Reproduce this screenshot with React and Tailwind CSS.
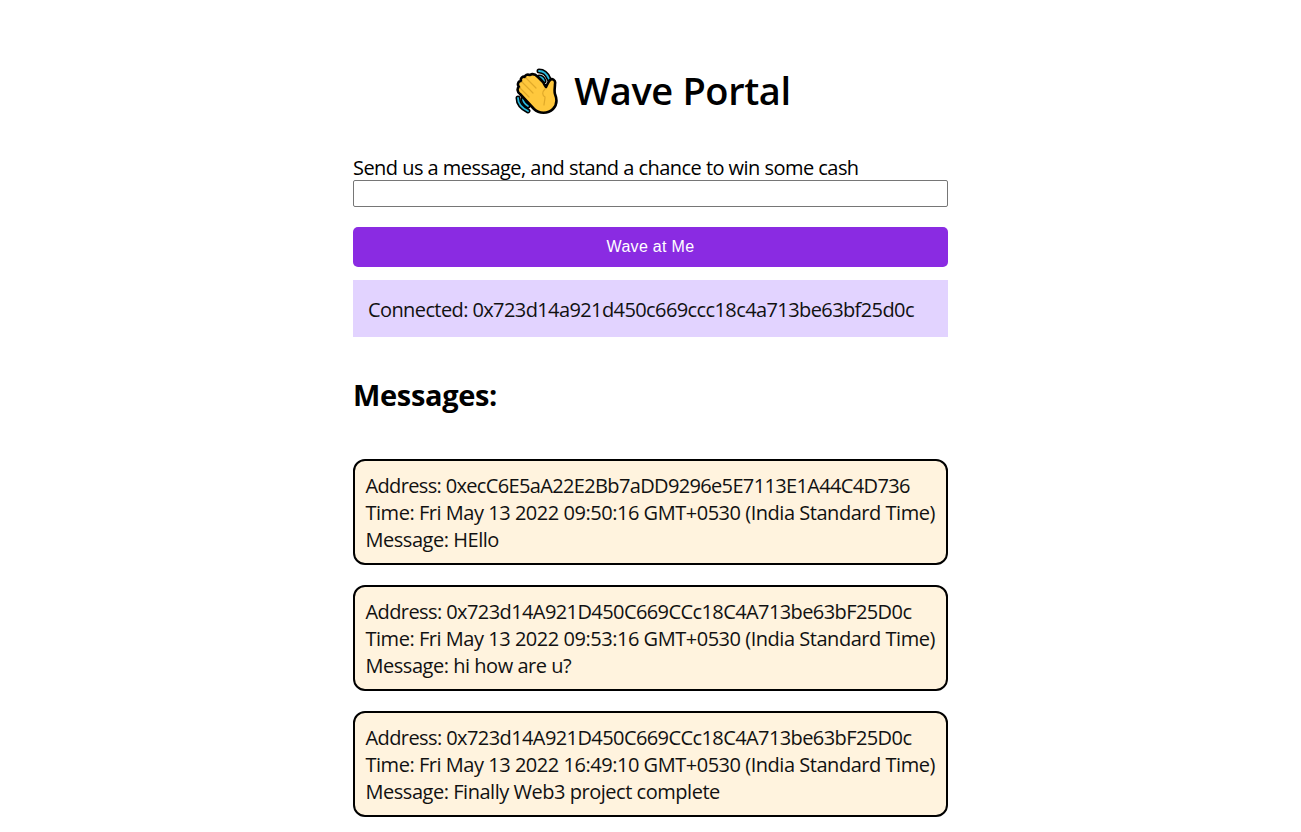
const FONT = "font-['Open_Sans','Noto_Sans',sans-serif]";

function Wave() {
  return (
    <svg width="46" height="48" viewBox="0 0 46 48" className="shrink-0 mt-[1px]">
      <g fill="none" stroke="#000" strokeWidth="5" strokeLinecap="round">
        <path d="M25 4c4 0 8 3 10 8" />
        <path d="M25 10c2 0 4 1 5 4" />
        <path d="M4 31c0 5 4 10 10 13" />
        <path d="M9 32c0 3 2 5 5 7" />
      </g>
      <g fill="none" stroke="#2bb8dc" strokeWidth="1.800" strokeLinecap="round">
        <path d="M25 4c4 0 8 3 10 8" />
        <path d="M25 10c2 0 4 1 5 4" />
        <path d="M4 31c0 5 4 10 10 13" />
        <path d="M9 32c0 3 2 5 5 7" />
      </g>
      <path
        d="M16 8C19 6 22 8 24 10L29 15C30 17 31 19 32 20C33 18 34 15 36 13C38 11 42 13 41 17C41 21 40 24 41 27C43 32 43 38 39 42C34 47 25 47 20 42L6 27C3 25 3 21 5 20C3 18 4 14 7 14C6 11 9 9 11 10C11 8 13 7 16 8Z"
        fill="#ffc83d"
        stroke="#000"
        strokeWidth="2.600"
        strokeLinejoin="round"
      />
      <g fill="none" stroke="#e0a92a" strokeWidth="1.200" strokeLinecap="round">
        <path d="M12 11L22 21" />
        <path d="M8 15L19 26" />
        <path d="M6 21L15 30" />
        <path d="M31 22C28 25 28 28 31 30C31 33 30 36 30 38" />
      </g>
    </svg>
  );
}

function Card({ address, time, message, addressTracking }) {
  return (
    <div className="border-2 border-black rounded-xl bg-[#fff3de] px-[10.5px] py-[11px] text-[20px] leading-[27px] tracking-[-0.47px] text-[#111] whitespace-nowrap h-[106px]">
      <div className={addressTracking}>Address: {address}</div>
      <div>Time: {time}</div>
      <div>Message: {message}</div>
    </div>
  );
}

export default function App() {
  return (
    <div className={`${FONT} bg-white text-black min-h-[832px] flex justify-center`}>
      <div className="w-[595px] pt-[65px]">
        <div className="flex items-center justify-center gap-[14px] h-[50px] pl-[4px]">
          <Wave />
          <h1 className="text-[38px] leading-[50px] font-semibold tracking-[-0.38px]">Wave Portal</h1>
        </div>
        <div className="mt-[39px] text-[20px] leading-[27px] tracking-[-0.54px] h-[26px] whitespace-nowrap">
          Send us a message, and stand a chance to win some cash
        </div>
        <input className="block w-full h-[27px] border border-[#767676] rounded-[2px] bg-white" />
        <button className="block w-full h-[40px] mt-[20px] bg-[#8a2be2] rounded-[5px] text-white text-[16px] tracking-[0.3px] font-['Liberation_Sans',sans-serif]">
          Wave at Me
        </button>
        <div className="mt-[13px] h-[57px] bg-[#e2d3ff] px-[15px] pt-[2px] flex items-center text-[20px] tracking-[-0.6px] text-[#111] whitespace-nowrap">
          Connected: 0x723d14a921d450c669ccc18c4a713be63bf25d0c
        </div>
        <h2 className="mt-[38px] text-[29px] leading-[40px] font-bold tracking-[-0.33px]">Messages:</h2>
        <div className="mt-[44px] flex flex-col gap-[20px]">
          <Card addressTracking="tracking-[-0.65px]" address="0xecC6E5aA22E2Bb7aDD9296e5E7113E1A44C4D736" time="Fri May 13 2022 09:50:16 GMT+0530 (India Standard Time)" message="HEllo" />
          <Card addressTracking="tracking-[-0.59px]" address="0x723d14A921D450C669CCc18C4A713be63bF25D0c" time="Fri May 13 2022 09:53:16 GMT+0530 (India Standard Time)" message="hi how are u?" />
          <Card addressTracking="tracking-[-0.59px]" address="0x723d14A921D450C669CCc18C4A713be63bF25D0c" time="Fri May 13 2022 16:49:10 GMT+0530 (India Standard Time)" message="Finally Web3 project complete" />
        </div>
      </div>
    </div>
  );
}
